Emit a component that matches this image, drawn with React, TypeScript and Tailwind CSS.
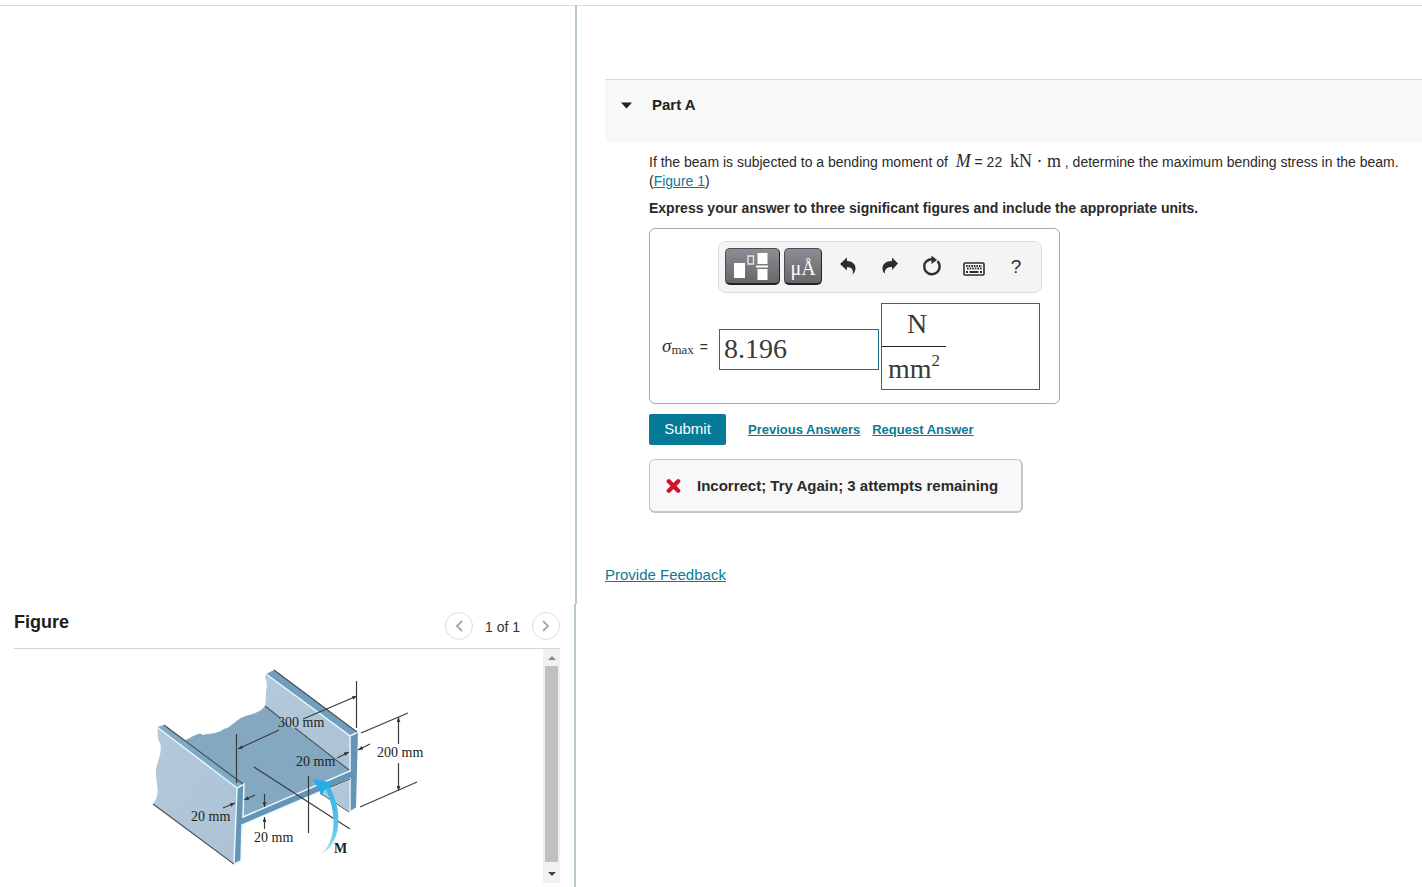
import React from "react";

const link = "text-[#0b7a94] underline underline-offset-1";

function Face({ points, fill }: { points: string; fill: string }) {
  return <polygon points={points} fill={fill} />;
}

function BeamFigure() {
  return (
    <svg
      width="300"
      height="220"
      viewBox="140 655 300 220"
      role="img"
      aria-label="H-shaped beam with dimensions and moment M"
    >
      <defs>
        <linearGradient id="moment" x1="0" y1="1" x2="0" y2="0">
          <stop offset="0" stopColor="#b5e0f5" />
          <stop offset="0.4" stopColor="#5cc4ec" />
          <stop offset="1" stopColor="#2fb4e8" />
        </linearGradient>
        <linearGradient id="plate" x1="0" y1="0" x2="1" y2="1">
          <stop offset="0" stopColor="#b4c9da" />
          <stop offset="1" stopColor="#abc3d6" />
        </linearGradient>
        <marker id="head" viewBox="0 0 8 6" refX="8" refY="3" markerWidth="5" markerHeight="4" markerUnits="userSpaceOnUse" orient="auto">
          <path d="M0 0L8 3L0 6Z" fill="#333" />
        </marker>
      </defs>

      <path d="M266 674L350 736V771L265 706Q266 700 266 692Q268 683 265 677Z" fill="url(#plate)" />
      <Face points="266,674 274,670 357,732 350,736" fill="#6f9fbd" />
      <path d="M265 706C259 714 250 714 243 717C236 720 230 728 224 729C218 734 210 733 203 735C199 731 193 737 185 740L243 785V817L350 771Z" fill="#84a8c0" />
      <Face points="319,792 350,778 350,812" fill="#b1c7d9" />
      <path d="M320 793L349 812" stroke="#555" strokeWidth="1" />
      <Face points="350,736 358,732 356,808 349,812" fill="#6595b5" />
      <Face points="242,817 350,771 350,779 242,825" fill="#6595b5" />
      <path d="M157 726L238 787L234 863L153 804C162 792 155 783 156 770C157 761 163 752 160 743C156 737 159 731 157 726Z" fill="url(#plate)" />
      <Face points="157,727 164,725 244,784 237,788" fill="#7fa9c4" />
      <Face points="236,788 244,784 241,861 234,864" fill="#6595b5" />

      <g fill="none" stroke="#eaf6fc" strokeWidth="1.5">
        <path d="M157 727L237 788L234 863" />
        <path d="M237 788L244 784L243 817L350 771V736L266 674" />
        <path d="M350 736L358 732" />
        <path d="M234 864L241 861L242 825L350 779V812L356 808" />
      </g>

      <g fill="none" stroke="#454f56" strokeWidth="1.1">
        <path d="M164 725L243 784M274 670L357 732M153 804L234 864M265 706L279 717M295 728L349 770M323 790L350 779" />
      </g>

      <g fill="none" stroke="#3c3c3c" strokeWidth="1.2">
        <path d="M236.500 734V783M356.500 681V728M361 733L408 713M360 807L417 782M254 767L350 829M308.500 776V833" />
        <path d="M279 730L238 749" markerEnd="url(#head)" />
        <path d="M303 719L357 696" markerEnd="url(#head)" />
        <path d="M398.500 744V717" markerEnd="url(#head)" />
        <path d="M398.500 763V791" markerEnd="url(#head)" />
        <path d="M337 758L349 752" markerEnd="url(#head)" />
        <path d="M370 744L358 750" markerEnd="url(#head)" />
        <path d="M223 808L235 803" markerEnd="url(#head)" />
        <path d="M255 795L244 800" markerEnd="url(#head)" />
        <path d="M264.500 794V807" markerEnd="url(#head)" />
        <path d="M264.500 829V817" markerEnd="url(#head)" />
      </g>

      <path d="M321 854.500C341 844 344 812 329 786L325 788C337 812 337 840 321 854.500Z" fill="url(#moment)" />
      <path d="M313 779L334 783L328 787L324 791L322 796Z" fill="#22aee6" />

      <g className="font-['Liberation_Serif',serif] text-[14px]" fill="#222">
        <text x="278" y="727">300 mm</text>
        <text x="296" y="766">20 mm</text>
        <text x="377" y="757">200 mm</text>
        <text x="191" y="821">20 mm</text>
        <text x="254" y="842">20 mm</text>
        <text x="334" y="853" fontWeight="bold">M</text>
      </g>
    </svg>
  );
}

function FigurePanel() {
  const round =
    "flex h-7 w-7 items-center justify-center rounded-full border border-[#dcdcdc] text-[#aaa]";
  return (
    <section id="figure" className="mr-px h-[283px] border-r-2 border-[#b9c9d0] pr-[14px] pl-[14px]">
      <header className="flex h-[45px] justify-between border-b border-[#d4d4d4]">
        <h2 className="pt-[6px] text-[18px] leading-6 font-bold text-[#1c1c1c]">Figure</h2>
        <div className="flex items-center gap-3 pb-[1px]">
          <button className={round} aria-label="Previous figure">
            <svg width="8" height="12" viewBox="0 0 8 12" fill="none" stroke="currentColor" strokeWidth="2"><path d="M7 1L2 6L7 11" /></svg>
          </button>
          <span className="pt-[3px] text-[14px] text-[#333]">1 of 1</span>
          <button className={round} aria-label="Next figure">
            <svg width="8" height="12" viewBox="0 0 8 12" fill="none" stroke="currentColor" strokeWidth="2"><path d="M1 1L6 6L1 11" /></svg>
          </button>
        </div>
      </header>
      <div className="flex h-[234px] justify-between">
        <div className="flex flex-1 justify-center pt-[6px] pl-[22px]">
          <BeamFigure />
        </div>
        <div className="flex w-[17px] flex-col items-center bg-[#f1f1f1]">
          <svg className="h-[17px] shrink-0" width="8" viewBox="0 0 8 17"><path d="M0 11L4 7L8 11Z" fill="#8c8c8c" /></svg>
          <div className="w-[13px] flex-1 bg-[#c1c1c1]" />
          <svg className="h-[21px] shrink-0" width="8" viewBox="0 0 8 21"><path d="M0 10L4 14L8 10Z" fill="#444" /></svg>
        </div>
      </div>
    </section>
  );
}

function Toolbar() {
  const dark =
    "flex h-[37px] items-center justify-center rounded-[5px] border border-[#4c4c52] border-r-[#222] border-b-2 border-b-[#222] bg-linear-to-b from-[#8d8d93] to-[#66666b] text-white";
  const plain = "flex h-9 w-[42px] items-center justify-center text-[#2d2d2d]";
  return (
    <div className="flex h-[52px] w-[324px] items-center rounded-lg border border-[#dcdcdc] bg-[#f4f4f4] pb-[2px] pl-[6px]">
      <button className={`${dark} w-[55px] pr-1`} aria-label="Templates">
        <svg width="36" height="30" viewBox="0 0 36 30">
          <path d="M1 12h11v15H1zM24.500 2h10v11h-10zM24.500 18h10v11h-10zM23 14.500h12v2H23z" fill="#fff" />
          <path d="M15 5h5.500v8H15z" fill="none" stroke="#e6e6e6" strokeWidth="1.400" />
        </svg>
      </button>
      <button className={`${dark} ml-1 w-[38px] pt-[5px] font-['Liberation_Serif',serif] text-[20px]`} aria-label="Units">μÅ</button>
      <button className={`${plain} ml-[5px]`} aria-label="Undo">
        <svg width="16" height="18" viewBox="0 0 16 18" fill="currentColor"><path d="M0 7L7 .5V4C12 4 16 7 15.500 12C15.200 14.500 14 16.500 12.500 17.500C14 13 11.500 10 7 10V13.500Z" /></svg>
      </button>
      <button className={plain} aria-label="Redo">
        <svg width="16" height="18" viewBox="0 0 16 18" fill="currentColor"><path d="M16 6.500L10 .5V4C4 4 0 7.500 .5 12C.7 14 1.500 15.500 3 16.500C2.500 12.500 4.500 10 10 10V13Z" /></svg>
      </button>
      <button className={plain} aria-label="Reset">
        <svg width="20" height="22" viewBox="0 0 20 22"><path d="M5 5.700A7.700 7.700 0 1 0 15.500 6.200M4.500 6.200Q8 3.700 11 4.500" fill="none" stroke="currentColor" strokeWidth="2.400" /><path d="M9.500 .5L15 5L9.500 9Z" fill="currentColor" /></svg>
      </button>
      <button className={plain} aria-label="Keyboard shortcuts">
        <svg className="mt-[6px]" width="22" height="14" viewBox="0 0 22 14">
          <rect x="1" y="1" width="20" height="12" rx="1" fill="#fff" stroke="currentColor" strokeWidth="1.600" />
          <path d="M3 4H19M4 6.500H19" stroke="currentColor" strokeWidth="1.800" strokeDasharray="1.600 1" />
          <path d="M3 10H5M6.500 10H15.500M17 10H19" stroke="currentColor" strokeWidth="1.800" />
        </svg>
      </button>
      <button className={`${plain} pt-[2px] text-[19px]`} aria-label="Help">?</button>
    </div>
  );
}

function AnswerBox() {
  const serif = "font-['Liberation_Serif',serif]";
  return (
    <div className="mt-[10px] h-[176px] w-[411px] rounded-md border border-[#a9a9a9] pt-3 pl-3">
      <div className="pl-[56px]">
        <Toolbar />
      </div>
      <div className="mt-[10px] flex items-center">
        <label htmlFor="value" className="flex w-[57px] items-baseline text-[14px] leading-5 text-[#333]">
          <i className={`${serif} text-[19px]`}>σ</i>
          <span className={`${serif} relative top-[2px] text-[13px]`}>max</span>
          <span className="ml-[6px]">=</span>
        </label>
        <input
          id="value"
          defaultValue="8.196"
          className={`mt-[5px] h-[41px] w-[160px] border border-[#1c7186] px-1 ${serif} text-[28px] text-[#3a3a3a] outline-none`}
        />
        <div
          role="textbox"
          aria-label="Units"
          tabIndex={0}
          className={`ml-[2px] h-[87px] w-[159px] border border-[#1c7186] ${serif} text-[28px] leading-8 text-[#3a3a3a]`}
        >
          <div className="w-16 border-b border-[#222]">
            <div className="h-[42px] pt-1 pl-[6px] text-center">N</div>
          </div>
          <div className="flex pt-[6px] pl-[6px]">
            mm<span className="text-[17px] leading-4">2</span>
          </div>
        </div>
      </div>
    </div>
  );
}

export default function App() {
  const serif = "font-['Liberation_Serif',serif] text-[18px]";
  return (
    <div className="min-h-screen bg-white pt-[5px] font-['Liberation_Sans',Arial,sans-serif] text-[#2a2a2a]">
      <main className="grid min-h-[882px] grid-cols-[577px_minmax(0,1fr)] border-t border-[#dadada]">
        <div className="flex flex-col">
          <div className="flex-1 border-r-2 border-[#b9c9d0]" />
          <FigurePanel />
        </div>
        <div className="pt-[73px] pl-7">
          <header className="flex h-[63px] items-start border-t border-[#d8d8d8] bg-[#f8f8f8] pt-[14px]">
            <button className="flex items-center text-[15px] leading-[22px] font-bold text-[#222]" aria-expanded="true">
              <svg className="mr-5 ml-4" width="11" height="7" viewBox="0 0 11 7"><path d="M0 .5H11L5.500 6.500Z" fill="#222" /></svg>
              Part A
            </button>
          </header>
          <section className="pt-[10px] pl-[44px]">
            <p className="text-[14px] leading-[19px]">
              <span className="whitespace-nowrap">
                If the beam is subjected to a bending moment of&nbsp; <i className={`${serif} leading-none`}>M</i> = 22 &nbsp;
                <span className={`${serif} leading-none`}>kN · m</span> , determine the maximum bending stress in the beam.
              </span>
              <br />
              (<a href="#figure" className={link}>Figure 1</a>)
            </p>
            <p className="mt-[8px] text-[14px] leading-[19px] font-bold">
              Express your answer to three significant figures and include the appropriate units.
            </p>
            <AnswerBox />
            <div className="mt-[10px] flex items-center text-[13px] font-bold">
              <button className="h-[31px] w-[77px] rounded-xs bg-[#057b98] text-[15px] font-normal text-white">Submit</button>
              <a href="#previous" className={`${link} ml-[22px]`}>Previous Answers</a>
              <a href="#request" className={`${link} ml-3`}>Request Answer</a>
            </div>
            <div className="mt-[14px] flex h-[54px] w-[374px] items-center rounded-md border border-r-2 border-b-2 border-[#c5c5c5] bg-[#f8f8f8] pl-4">
              <svg width="15" height="16" viewBox="0 0 16 16" stroke="#d0142c" strokeWidth="4.600" strokeLinecap="round"><path d="M3 3L13 13M13 3L3 13" /></svg>
              <p className="ml-4 pt-[2px] text-[15px] font-bold whitespace-nowrap">Incorrect; Try Again; 3 attempts remaining</p>
            </div>
          </section>
          <a href="#feedback" className={`${link} mt-[51px] inline-block text-[15px]`}>Provide Feedback</a>
        </div>
      </main>
    </div>
  );
}
